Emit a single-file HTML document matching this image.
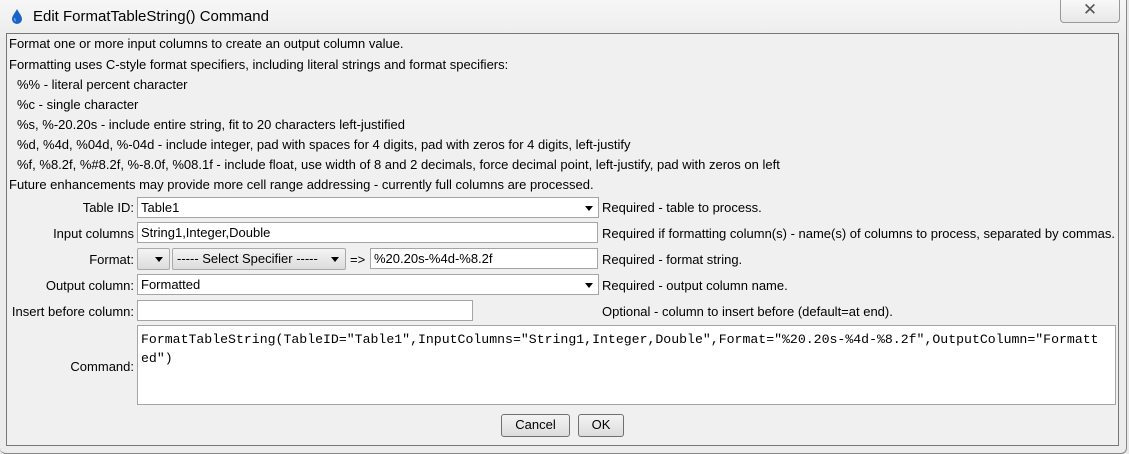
<!DOCTYPE html>
<html><head><style>
body{margin:0;width:1129px;height:454px;background:#e8e8e8;position:relative;overflow:hidden;font-family:"Liberation Sans",sans-serif;font-size:13px;color:#000}
.win{position:absolute;left:0;top:0;width:1126px;height:453px;background:linear-gradient(#f6f6f6,#ececec 40px,#ececec);border-right:1px solid #888;border-bottom:1px solid #888;border-radius:0 0 6px 6px}
.panel{position:absolute;left:6px;top:33px;width:1111px;height:411px;background:#f0f0f0;border:1px solid #777}
.t{position:absolute;white-space:nowrap}
.f{position:absolute;background:#fff;border:1px solid #a5a5a5;box-sizing:border-box;height:21px;padding:2px 3px;white-space:nowrap}
.arr{position:absolute;right:5px;top:8px;width:0;height:0;border-left:4px solid transparent;border-right:4px solid transparent;border-top:5px solid #000}
.btn{position:absolute;box-sizing:border-box;border:1px solid #707070;border-radius:3px;background:linear-gradient(#f4f4f4,#dcdcdc);text-align:center;line-height:20px}
.lbl{position:absolute;text-align:right;width:129px;left:5px;white-space:nowrap}
</style></head><body>
<div class="win">
<svg style="position:absolute;left:10px;top:8px" width="14" height="16" viewBox="0 0 14 16"><path d="M7 1 C9 5 12 8 12 11 A5 5 0 0 1 2 11 C2 8 5 5 7 1Z" fill="#1a64c8"/><path d="M5 10 A2 2 0 0 0 6 13" stroke="#8fc0ff" fill="none"/></svg>
<div class="t" style="left:33px;top:8px;font-size:15px">Edit FormatTableString() Command</div>
<div style="position:absolute;left:1060px;top:0;width:58px;height:22px;border:1px solid #999;border-top:none;border-radius:0 0 4px 4px;background:linear-gradient(#f8f8f8,#e8e8e8)"><div style="text-align:center;font-size:17px;color:#555;line-height:20px">✕</div></div>
</div>
<div class="panel"></div>
<div class="t" style="left:9px;top:36px">Format one or more input columns to create an output column value.</div>
<div class="t" style="left:9px;top:57px">Formatting uses C-style format specifiers, including literal strings and format specifiers:</div>
<div class="t" style="left:17px;top:77px">%% - literal percent character</div>
<div class="t" style="left:17px;top:97px">%c - single character</div>
<div class="t" style="left:17px;top:117px">%s, %-20.20s - include entire string, fit to 20 characters left-justified</div>
<div class="t" style="left:17px;top:137px">%d, %4d, %04d, %-04d - include integer, pad with spaces for 4 digits, pad with zeros for 4 digits, left-justify</div>
<div class="t" style="left:17px;top:157px">%f, %8.2f, %#8.2f, %-8.0f, %08.1f - include float, use width of 8 and 2 decimals, force decimal point, left-justify, pad with zeros on left</div>
<div class="t" style="left:9px;top:177px">Future enhancements may provide more cell range addressing - currently full columns are processed.</div>

<div class="lbl" style="top:200px">Table ID:</div>
<div class="f" style="left:137px;top:197px;width:462px">Table1<div class="arr"></div></div>
<div class="t" style="left:602px;top:200px">Required - table to process.</div>

<div class="lbl" style="top:226px">Input columns</div>
<div class="f" style="left:137px;top:222px;width:461px">String1,Integer,Double</div>
<div class="t" style="left:602px;top:226px">Required if formatting column(s) - name(s) of columns to process, separated by commas.</div>

<div class="lbl" style="top:252px">Format:</div>
<div class="btn" style="left:137px;top:248px;width:33px;height:22px;border-color:#aaa;border-radius:2px"><div class="arr" style="top:8px;right:6px"></div></div>
<div class="btn" style="left:172px;top:248px;width:174px;height:22px;border-color:#aaa;border-radius:2px;text-align:left;padding-left:4px;line-height:20px">----- Select Specifier -----<div class="arr" style="top:8px;right:6px"></div></div>
<div class="t" style="left:350px;top:252px">=&gt;</div>
<div class="f" style="left:370px;top:248px;width:228px">%20.20s-%4d-%8.2f</div>
<div class="t" style="left:602px;top:252px">Required - format string.</div>

<div class="lbl" style="top:278px">Output column:</div>
<div class="f" style="left:137px;top:274px;width:462px">Formatted<div class="arr"></div></div>
<div class="t" style="left:602px;top:278px">Required - output column name.</div>

<div class="lbl" style="top:304px">Insert before column:</div>
<div class="f" style="left:137px;top:300px;width:336px"></div>
<div class="t" style="left:602px;top:304px">Optional - column to insert before (default=at end).</div>

<div class="lbl" style="top:359px">Command:</div>
<div class="f" style="left:137px;top:325px;width:979px;height:80px;font-family:'Liberation Mono',monospace;font-size:13.2px;line-height:19px;white-space:pre;overflow:hidden;padding:4px 3px">FormatTableString(TableID="Table1",InputColumns="String1,Integer,Double",Format="%20.20s-%4d-%8.2f",OutputColumn="Formatt
ed")</div>

<div class="btn" style="left:501px;top:414px;width:69px;height:23px">Cancel</div>
<div class="btn" style="left:578px;top:414px;width:46px;height:23px">OK</div>
</body></html>
